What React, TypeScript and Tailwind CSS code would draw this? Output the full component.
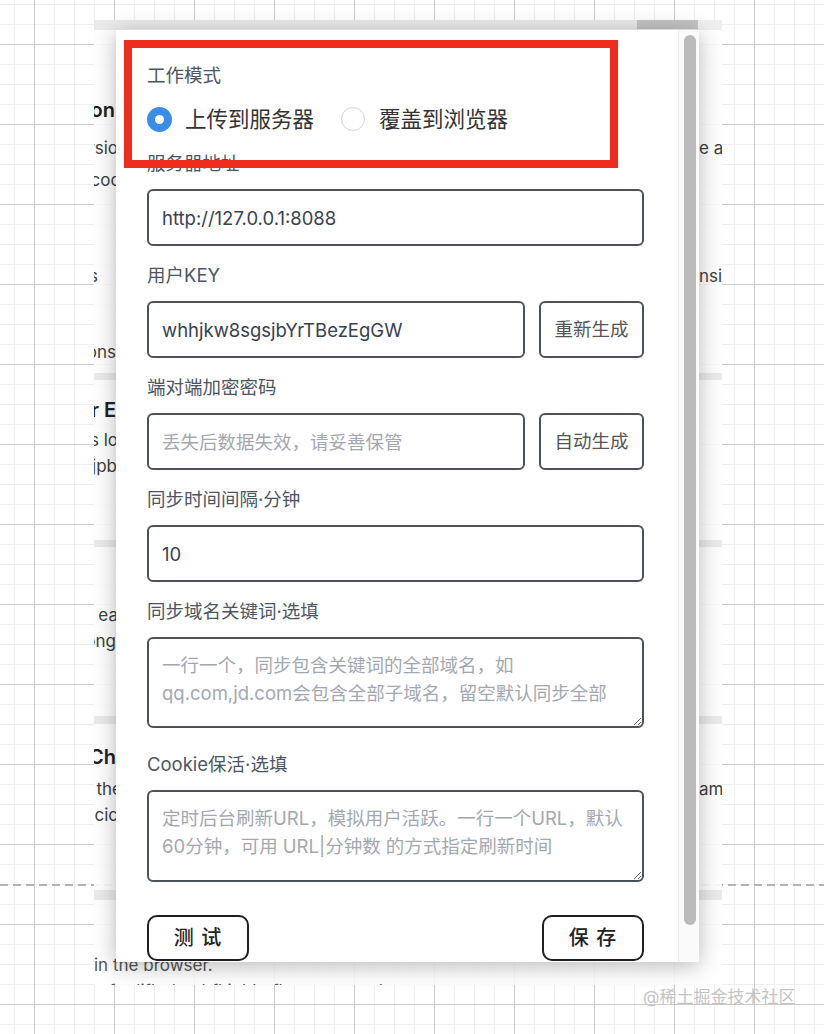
import React from "react";

type RowProps = {
  cls: string;
  left: string;
  lw: string;
  right?: string;
  bold?: boolean;
};

function Row({ cls, left, lw, right, bold }: RowProps) {
  return (
    <div className={`flex justify-between h-[26px] items-center whitespace-nowrap ${cls}`}>
      <div
        className={`flex justify-end shrink-0 ${lw} ${
          bold ? "text-[20px] font-semibold text-[#202124]" : ""
        }`}
      >
        <span>{left}</span>
      </div>
      <div className="w-[23px] shrink-0">{right ?? ""}</div>
    </div>
  );
}

function BgPage() {
  return (
    <div className="relative z-[1] w-[628px] h-[965px] overflow-hidden bg-white/90 text-[17px] leading-[26px] text-[#3c4043]">
      <div className="flex h-[10px]">
        <div className="w-[543px] bg-[#ebebeb]" />
        <div className="w-[61px] bg-[#c4c4c4]" />
        <div className="flex-1 bg-[#efefef]" />
      </div>
      <div className="h-[343px] flex flex-col">
        <Row cls="mt-[67px]" left="Cookie Sync Extension" lw="w-[21px]" bold />
        <Row cls="mt-[12px]" left="Versio" lw="w-[24px]" right="e and sync" />
        <Row cls="mt-[6px]" left="Sync cookie" lw="w-[50px]" />
        <Row cls="mt-[70px]" left="Permissions" lw="w-[4px]" right="nsions" />
        <Row cls="mt-[50px]" left="Extensions" lw="w-[22px]" />
      </div>
      <div className="h-[7px] bg-[#ebebeb]" />
      <div className="h-[160px] flex flex-col">
        <Row cls="mt-[17px]" left="Cookie Sync for E" lw="w-[22px]" bold />
        <Row cls="mt-[4px]" left="Allows lo" lw="w-[24px]" />
        <Row cls="mt-0" left="ID: kjpb" lw="w-[23px]" />
      </div>
      <div className="h-[7px] bg-[#ebebeb]" />
      <div className="h-[169px] flex flex-col">
        <Row cls="mt-[55px]" left="Sync ea" lw="w-[24px]" />
        <Row cls="mt-0" left="Sync along" lw="w-[22px]" />
      </div>
      <div className="h-[8px] bg-[#ebebeb]" />
      <div className="h-[166px] flex flex-col">
        <Row cls="mt-[20px]" left="Chr" lw="w-[30px]" bold />
        <Row cls="mt-[6px]" left="Sync with the" lw="w-[28px]" right="am" />
        <Row cls="mt-0" left="Periodic cic" lw="w-[24px]" />
      </div>
      <div className="h-[10px] bg-[#ebebeb]" />
      <div className="flex flex-col text-[#555]">
        <div className="mt-[52px] h-[26px] whitespace-nowrap">in the browser.</div>
        <div className="h-[26px] whitespace-nowrap">mfmdifbgbaabfkjpbhcfhacnamngcd</div>
      </div>
    </div>
  );
}

function Label({ cls, children }: { cls: string; children: React.ReactNode }) {
  return <div className={`h-[24px] leading-[24px] text-[18.5px] text-[#4b5563] ${cls}`}>{children}</div>;
}

const inputCls =
  "block w-full min-w-0 h-[57px] border-[2.5px] border-[#4b525c] rounded-[6px] px-[13px] text-[18.5px] text-[#374151] placeholder:text-[#a3a8b0] outline-none bg-white";

const textareaCls =
  "block w-full border-[2.5px] border-[#4b525c] rounded-[6px] pl-[13px] pr-[10px] pt-[12px] text-[18.5px] leading-[28px] text-[#374151] placeholder:text-[#a3a8b0] outline-none bg-white resize-y";

const sideBtnCls =
  "shrink-0 ml-[14px] w-[105px] h-[57px] border-[2.5px] border-[#4b525c] rounded-[6px] text-[18.5px] text-[#555] bg-white";

const bottomBtnCls =
  "w-[102px] h-[46px] border-[2.5px] border-[#1f1f1f] rounded-[10px] text-[20px] font-medium tracking-[1px] text-[#222] bg-white";

function Popup() {
  return (
    <div className="absolute z-[2] left-[116px] top-[29px] w-[583px] h-[933px] flex bg-white border-t border-[#dcdcdc] shadow-[0_4px_22px_rgba(0,0,0,0.28)] overflow-hidden">
      <div className="flex-1 min-w-0 pl-[31px] pr-[34px] pt-[33px]">
        <Label cls="">工作模式</Label>
        <div className="mt-[17px] h-[30px] flex items-center">
          <span className="w-[25px] h-[25px] rounded-full bg-[#3b8ee8] flex items-center justify-center">
            <span className="w-[9px] h-[9px] rounded-full bg-white" />
          </span>
          <span className="ml-[13px] text-[21.5px] text-[#333]">上传到服务器</span>
          <span className="ml-[27px] w-[24px] h-[24px] rounded-full border border-[#d4d4d4] bg-white" />
          <span className="ml-[14px] text-[21.5px] text-[#333]">覆盖到浏览器</span>
        </div>

        <Label cls="mt-[17px]">服务器地址</Label>
        <input className={`mt-[14px] ${inputCls}`} defaultValue="http://127.0.0.1:8088" />

        <Label cls="mt-[17px]">用户KEY</Label>
        <div className="mt-[14px] flex">
          <input className={`flex-1 ${inputCls}`} defaultValue="whhjkw8sgsjbYrTBezEgGW" />
          <button className={sideBtnCls}>重新生成</button>
        </div>

        <Label cls="mt-[17px]">端对端加密密码</Label>
        <div className="mt-[14px] flex">
          <input className={`flex-1 ${inputCls}`} placeholder="丢失后数据失效，请妥善保管" />
          <button className={sideBtnCls}>自动生成</button>
        </div>

        <Label cls="mt-[17px]">同步时间间隔·分钟</Label>
        <input className={`mt-[14px] ${inputCls}`} defaultValue="10" />

        <Label cls="mt-[17px]">同步域名关键词·选填</Label>
        <textarea
          className={`mt-[14px] h-[91px] ${textareaCls}`}
          placeholder={"一行一个，同步包含关键词的全部域名，如\nqq.com,jd.com会包含全部子域名，留空默认同步全部"}
        />

        <Label cls="mt-[24px]">Cookie保活·选填</Label>
        <textarea
          className={`mt-[14px] h-[92px] ${textareaCls}`}
          placeholder={"定时后台刷新URL，模拟用户活跃。一行一个URL，默认\n60分钟，可用 URL|分钟数 的方式指定刷新时间"}
        />

        <div className="mt-[33px] flex justify-between">
          <button className={bottomBtnCls}>测 试</button>
          <button className={bottomBtnCls}>保 存</button>
        </div>
      </div>
      <div className="w-[21px] shrink-0 border-l border-[#ececec] bg-[#fafafa] pl-[5px] pt-[5px]">
        <div className="w-[12px] h-[890px] rounded-full bg-[#bababa]" />
      </div>
    </div>
  );
}

export default function App() {
  return (
    <div className="relative w-[824px] h-[1034px] overflow-hidden bg-white font-['Inter','Noto_Sans_CJK_SC',sans-serif] [background-image:linear-gradient(to_right,#cbcbcb_1px,transparent_1px),linear-gradient(to_bottom,#cbcbcb_1px,transparent_1px),linear-gradient(to_right,#efefef_1px,transparent_1px),linear-gradient(to_bottom,#efefef_1px,transparent_1px)] [background-size:80px_80px,80px_80px,20px_20px,20px_20px] [background-position:34px_0,0_44px,14px_0,0_4px]">
      <div className="absolute left-0 top-[884px] w-full h-[2px] [background-image:repeating-linear-gradient(to_right,#b4b4b4_0_8px,transparent_8px_13px)]" />
      <div className="pt-[20px] pl-[94px]">
        <BgPage />
      </div>
      <Popup />
      <div className="absolute z-[3] left-[124px] top-[40px] w-[494px] h-[128px] border-[8px] border-[#ee2d1f]" />
      <div className="absolute z-[3] left-[643px] top-[985px] text-[17px] leading-[24px] text-[#c4c4c4] whitespace-nowrap">
        @稀土掘金技术社区
      </div>
    </div>
  );
}
